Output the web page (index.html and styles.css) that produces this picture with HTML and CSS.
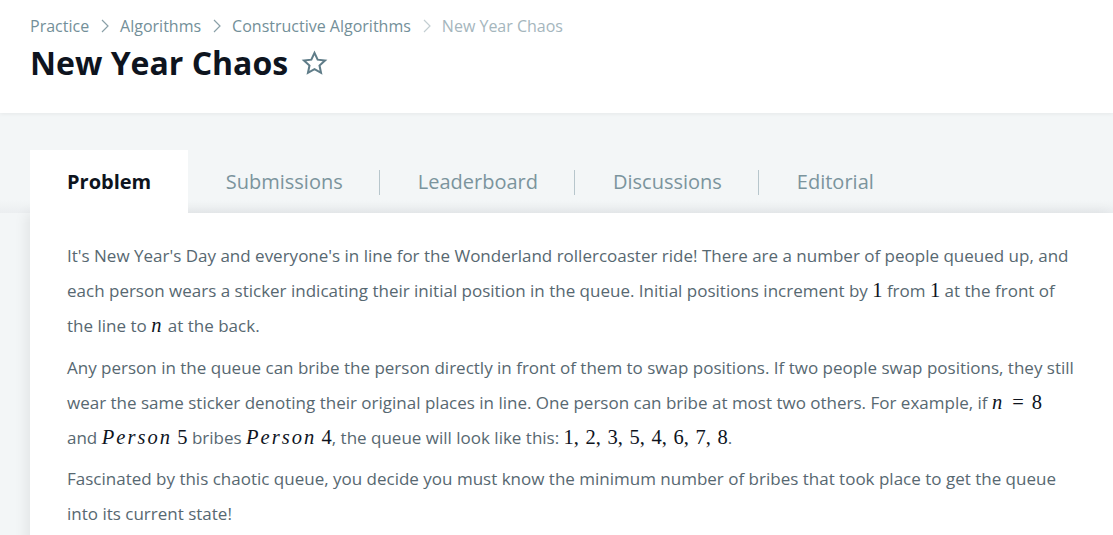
FILE: index.html
```html
<!DOCTYPE html>
<html>
<head>
<meta charset="utf-8">
<link rel="stylesheet" href="styles.css">
</head>
<body>
<header class="page-head">
  <nav class="crumbs">
    <a class="crumb">Practice</a>
    <svg class="chev" viewBox="0 0 8 14" width="8" height="14"><path d="M1 1l6 6-6 6" fill="none" stroke="#8aa0a8" stroke-width="1.2"/></svg>
    <a class="crumb">Algorithms</a>
    <svg class="chev" viewBox="0 0 8 14" width="8" height="14"><path d="M1 1l6 6-6 6" fill="none" stroke="#8aa0a8" stroke-width="1.2"/></svg>
    <a class="crumb">Constructive Algorithms</a>
    <svg class="chev" viewBox="0 0 8 14" width="8" height="14"><path d="M1 1l6 6-6 6" fill="none" stroke="#c3ced2" stroke-width="1.2"/></svg>
    <span class="crumb current">New Year Chaos</span>
  </nav>
  <h1 class="title">New Year Chaos
    <svg class="star" viewBox="0 0 24 24" width="27" height="27"><path d="M12 2.6l2.8 6 6.55.75-4.9 4.45 1.35 6.45L12 17l-5.8 3.25 1.35-6.45-4.9-4.450 6.55-.75z" fill="none" stroke="#5f7c88" stroke-width="1.8" stroke-linejoin="miter"/></svg>
  </h1>
</header>
<main class="main">
  <div class="tabs">
    <div class="tab active">Problem</div>
    <div class="tab sep-r">Submissions</div>
    <div class="tab sep-r">Leaderboard</div>
    <div class="tab sep-r">Discussions</div>
    <div class="tab">Editorial</div>
  </div>
  <section class="panel">
    <p>It's New Year's Day and everyone's in line for the Wonderland rollercoaster ride! There are a number of people queued up, and each person wears a sticker indicating their initial position in the queue. Initial positions increment by <span class="m">1</span> from <span class="m">1</span> at the front of the line to <span class="m i">n</span> at the back.</p>
    <p>Any person in the queue can bribe the person directly in front of them to swap positions. If two people swap positions, they still wear the same sticker denoting their original places in line. One person can bribe at most two others. For example, if <span class="m"><span class="i">n</span><span class="rel">=</span>8</span> and <span class="m"><span class="i">Person</span>&nbsp;5</span> bribes <span class="m"><span class="i">Person</span>&nbsp;4</span>, the queue will look like this: <span class="m list">1, 2, 3, 5, 4, 6, 7, 8</span>.</p>
    <p>Fascinated by this chaotic queue, you decide you must know the minimum number of bribes that took place to get the queue into its current state!</p>
  </section>
</main>
</body>
</html>
```

FILE: styles.css
```css
html, body {
  margin: 0;
  padding: 0;
}
body {
  font-family: "Open Sans", "Liberation Sans", sans-serif;
  background: #f3f6f7;
  overflow: hidden;
  height: 535px;
}
.page-head {
  background: #fff;
  padding: 13px 30px 0;
  height: 100px;
  box-shadow: 0 1px 4px rgba(0, 0, 0, 0.06);
  position: relative;
  z-index: 2;
}
.crumbs {
  display: flex;
  align-items: center;
  font-size: 16px;
  line-height: 26px;
  color: #738f99;
}
.crumb {
  color: #738f99;
}
.crumb.current {
  color: #a5b6bd;
}
.chev {
  margin: 0 11px 0 12px;
}
.title {
  margin: 2px 0 0;
  font-size: 32px;
  font-weight: 700;
  line-height: 44px;
  color: #0e141e;
  display: flex;
  align-items: center;
  gap: 13px;
}
.main {
  padding-top: 37px;
}
.tabs {
  display: flex;
  align-items: stretch;
  height: 63px;
  padding-left: 30px;
  background: linear-gradient(#f3f6f7 80%, #ebeef0);
}
.tab {
  padding: 0 37.5px;
  font-size: 20px;
  color: #7b949d;
  display: flex;
  align-items: center;
  position: relative;
}
.tab.sep-r::after {
  content: "";
  position: absolute;
  right: 0;
  top: 20px;
  height: 25px;
  width: 1px;
  background: #b7c6cc;
}
.tab.active {
  background: #fff;
  color: #0e141e;
  font-weight: 700;
  padding: 0 37px;
  z-index: 2;
}
.panel {
  background: #fff;
  margin-left: 30px;
  padding: 25px 37px 0;
  height: 400px;
  box-shadow: -4px 0 12px rgba(0, 0, 0, 0.07);
  position: relative;
  z-index: 1;
}
.panel p {
  margin: 0 0 6.5px;
  font-size: 17px;
  line-height: 35px;
  color: #576871;
}
.m {
  font-family: "Liberation Serif", "Times New Roman", serif;
  font-size: 20.5px;
  color: #0e141e;
  white-space: nowrap;
}
.i {
  font-style: italic;
  letter-spacing: 0.1em;
}
.rel {
  margin: 0 8px;
}
.list {
  word-spacing: 1.5px;
}
```
